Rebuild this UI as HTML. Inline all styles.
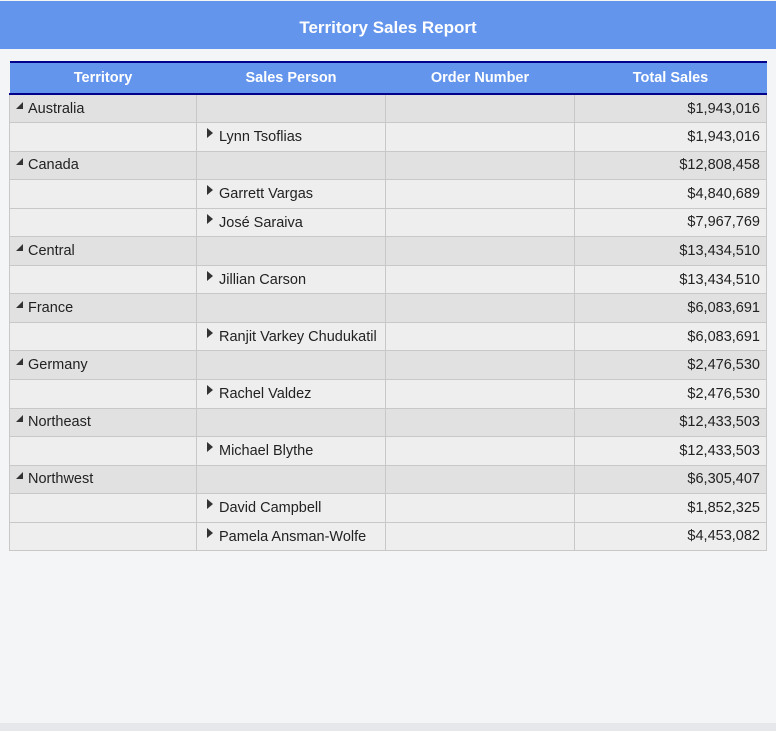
<!DOCTYPE html>
<html><head><meta charset="utf-8"><style>
html,body{margin:0;padding:0;width:776px;height:731px;overflow:hidden;background:#f4f5f7;font-family:"Liberation Sans",sans-serif;position:relative}
.top{position:absolute;left:0;top:1px;width:776px;height:48px;background:#6495ed;color:#fff;font-weight:bold;font-size:17px;text-align:center;line-height:54px}
.bot{position:absolute;left:0;top:723px;width:776px;height:8px;background:#e6e7ea}
table{position:absolute;left:9px;top:61px;width:757px;border-collapse:collapse;table-layout:fixed}
th{background:#6495ed;color:#fff;font-size:14.5px;font-weight:bold;height:30px;padding:0;border-top:2px solid #00008b;border-bottom:2px solid #00008b}
td{border:1px solid #c8c8c8;height:28.56px;padding:0 6px;font-size:14.5px;color:#222;white-space:nowrap;box-sizing:border-box}
tr.g td{background:#e1e1e1}
tr.c td{background:#efeeee}
td.r{text-align:right}
.dn{display:inline-block;width:0;height:0;border-left:7px solid transparent;border-bottom:7px solid #333;margin-right:5px;vertical-align:4px}
.rt{display:inline-block;width:0;height:0;border-top:5px solid transparent;border-bottom:5px solid transparent;border-left:6px solid #333;margin:0 6px 0 4px;vertical-align:3px}
</style></head><body>
<div class="top">Territory Sales Report</div>
<table>
<colgroup><col style="width:187px"><col style="width:189px"><col style="width:189px"><col style="width:192px"></colgroup>
<tr><th>Territory</th><th>Sales Person</th><th>Order Number</th><th>Total Sales</th></tr>
<tr class="g"><td><span class="dn"></span>Australia</td><td></td><td></td><td class="r">$1,943,016</td></tr>
<tr class="c"><td></td><td><span class="rt"></span>Lynn Tsoflias</td><td></td><td class="r">$1,943,016</td></tr>
<tr class="g"><td><span class="dn"></span>Canada</td><td></td><td></td><td class="r">$12,808,458</td></tr>
<tr class="c"><td></td><td><span class="rt"></span>Garrett Vargas</td><td></td><td class="r">$4,840,689</td></tr>
<tr class="c"><td></td><td><span class="rt"></span>José Saraiva</td><td></td><td class="r">$7,967,769</td></tr>
<tr class="g"><td><span class="dn"></span>Central</td><td></td><td></td><td class="r">$13,434,510</td></tr>
<tr class="c"><td></td><td><span class="rt"></span>Jillian Carson</td><td></td><td class="r">$13,434,510</td></tr>
<tr class="g"><td><span class="dn"></span>France</td><td></td><td></td><td class="r">$6,083,691</td></tr>
<tr class="c"><td></td><td><span class="rt"></span>Ranjit Varkey Chudukatil</td><td></td><td class="r">$6,083,691</td></tr>
<tr class="g"><td><span class="dn"></span>Germany</td><td></td><td></td><td class="r">$2,476,530</td></tr>
<tr class="c"><td></td><td><span class="rt"></span>Rachel Valdez</td><td></td><td class="r">$2,476,530</td></tr>
<tr class="g"><td><span class="dn"></span>Northeast</td><td></td><td></td><td class="r">$12,433,503</td></tr>
<tr class="c"><td></td><td><span class="rt"></span>Michael Blythe</td><td></td><td class="r">$12,433,503</td></tr>
<tr class="g"><td><span class="dn"></span>Northwest</td><td></td><td></td><td class="r">$6,305,407</td></tr>
<tr class="c"><td></td><td><span class="rt"></span>David Campbell</td><td></td><td class="r">$1,852,325</td></tr>
<tr class="c"><td></td><td><span class="rt"></span>Pamela Ansman-Wolfe</td><td></td><td class="r">$4,453,082</td></tr>
</table>
<div class="bot"></div>
</body></html>
